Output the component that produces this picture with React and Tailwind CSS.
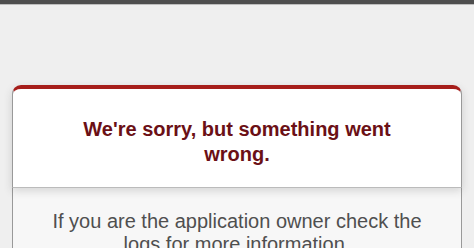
import React from 'react';

function App() {
    return (
        <div className="h-screen bg-[#efefef] text-center font-['Liberation_Sans',Arial,sans-serif] text-[#2e2f30] overflow-hidden">
            {/* Browser chrome strip */}
            <div className="h-[5px] bg-[#4e4e4e] border-b border-[#bdbdbd]" />

            <div className="mx-[12px] mt-[80px]">
                <div className="bg-white border border-[#ccc] border-x-[#999] border-b-[#bbb] border-t-[4px] border-t-[#a51d1a] rounded-t-[9px] px-[54px] pt-[28px] pb-[20px] shadow-[0_3px_8px_rgba(50,50,50,0.17)] relative z-10">
                    <h1 className="text-[20px] leading-[25px] font-bold text-[#6b1016]">
                        We're sorry, but something went wrong.
                    </h1>
                </div>
                <p className="bg-[#f7f7f7] border border-[#999] border-t-0 rounded-b-[4px] px-[20px] pt-[22px] pb-[20px] text-[20px] leading-[23px] text-[#4f4f4f]">
                    If you are the application owner check the logs for more information.
                </p>
            </div>
        </div>
    );
}

export default App;
